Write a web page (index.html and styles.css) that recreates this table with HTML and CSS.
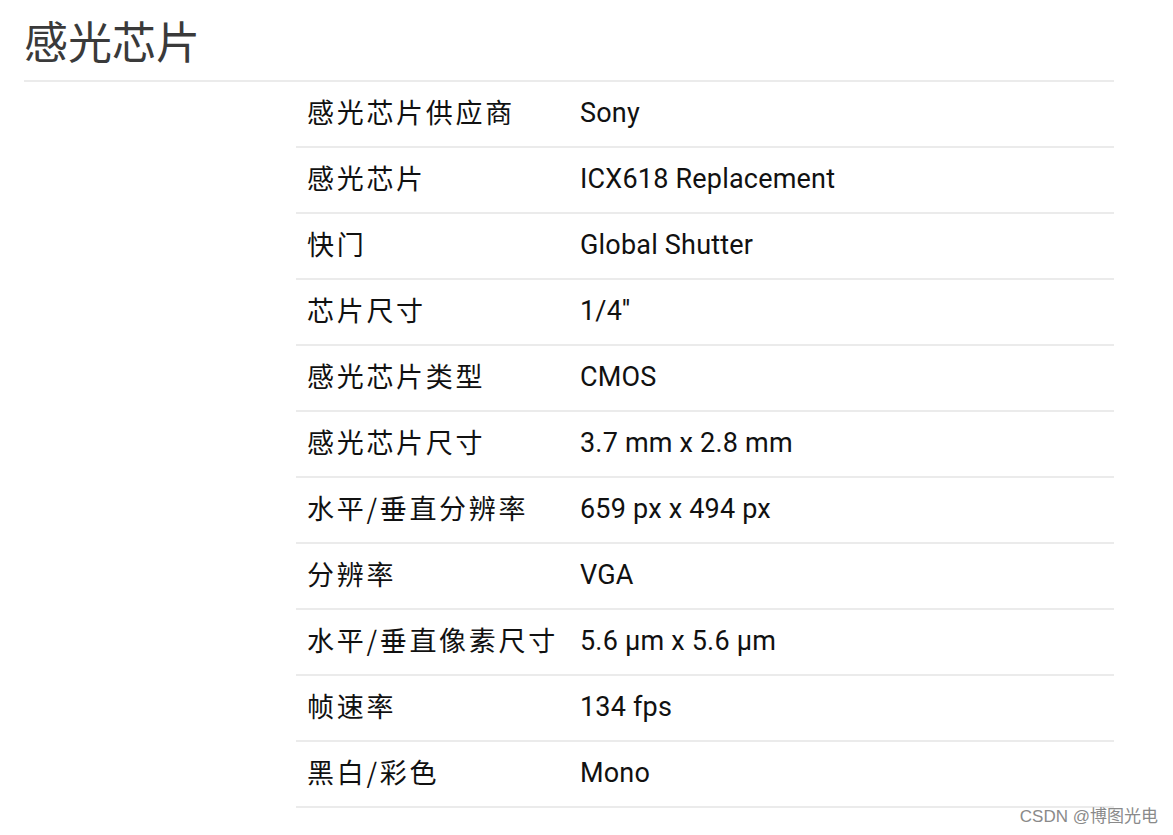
FILE: index.html
```html
<!DOCTYPE html>
<html lang="zh-CN">
<head>
<meta charset="utf-8">
<title>感光芯片</title>
<link rel="stylesheet" href="styles.css">
</head>
<body>
<div class="page">
  <h2 class="title">感光芯片</h2>
  <div class="specs">
    <div class="row"><div class="label">感光芯片供应商</div><div class="value">Sony</div></div>
    <div class="row"><div class="label">感光芯片</div><div class="value">ICX618 Replacement</div></div>
    <div class="row"><div class="label">快门</div><div class="value">Global Shutter</div></div>
    <div class="row"><div class="label">芯片尺寸</div><div class="value">1/4''</div></div>
    <div class="row"><div class="label">感光芯片类型</div><div class="value">CMOS</div></div>
    <div class="row"><div class="label">感光芯片尺寸</div><div class="value">3.7 mm x 2.8 mm</div></div>
    <div class="row"><div class="label">水平/垂直分辨率</div><div class="value">659 px x 494 px</div></div>
    <div class="row"><div class="label">分辨率</div><div class="value">VGA</div></div>
    <div class="row"><div class="label">水平/垂直像素尺寸</div><div class="value">5.6 µm x 5.6 µm</div></div>
    <div class="row"><div class="label">帧速率</div><div class="value">134 fps</div></div>
    <div class="row"><div class="label">黑白/彩色</div><div class="value">Mono</div></div>
  </div>
</div>
<div class="watermark">CSDN @博图光电</div>
</body>
</html>
```
FILE: styles.css
```css
html, body {
  margin: 0;
  padding: 0;
  background: #ffffff;
}
body {
  font-family: "Noto Sans CJK SC", "Noto Sans", sans-serif;
  color: #111;
}
.page {
  width: 1090px;
  margin-left: 24px;
}
.title {
  margin: 0;
  padding: 18px 0 18px 0;
  font-size: 44px;
  line-height: 44px;
  font-weight: 400;
  color: #3a3a3a;
  border-bottom: 2px solid #ebebeb;
}
.specs {
  margin-left: 272px;
  display: flex;
  flex-direction: column;
}
.row {
  display: grid;
  grid-template-columns: 284px 1fr;
  align-items: center;
  height: 64px;
  border-bottom: 2px solid #ebebeb;
}
.label {
  padding-left: 11px;
  padding-bottom: 5px;
  font-size: 27px;
  letter-spacing: 2.7px;
  color: #111;
  line-height: 1;
}
.value {
  padding-bottom: 2px;
  font-family: Roboto, "Noto Sans", sans-serif;
  font-size: 27px;
  color: #111;
  line-height: 1;
  letter-spacing: 0.2px;
}
.watermark {
  position: absolute;
  right: 15px;
  bottom: 8px;
  font-family: "Liberation Sans", "Noto Sans CJK SC", sans-serif;
  font-size: 17px;
  color: #8a8a8a;
}
```
